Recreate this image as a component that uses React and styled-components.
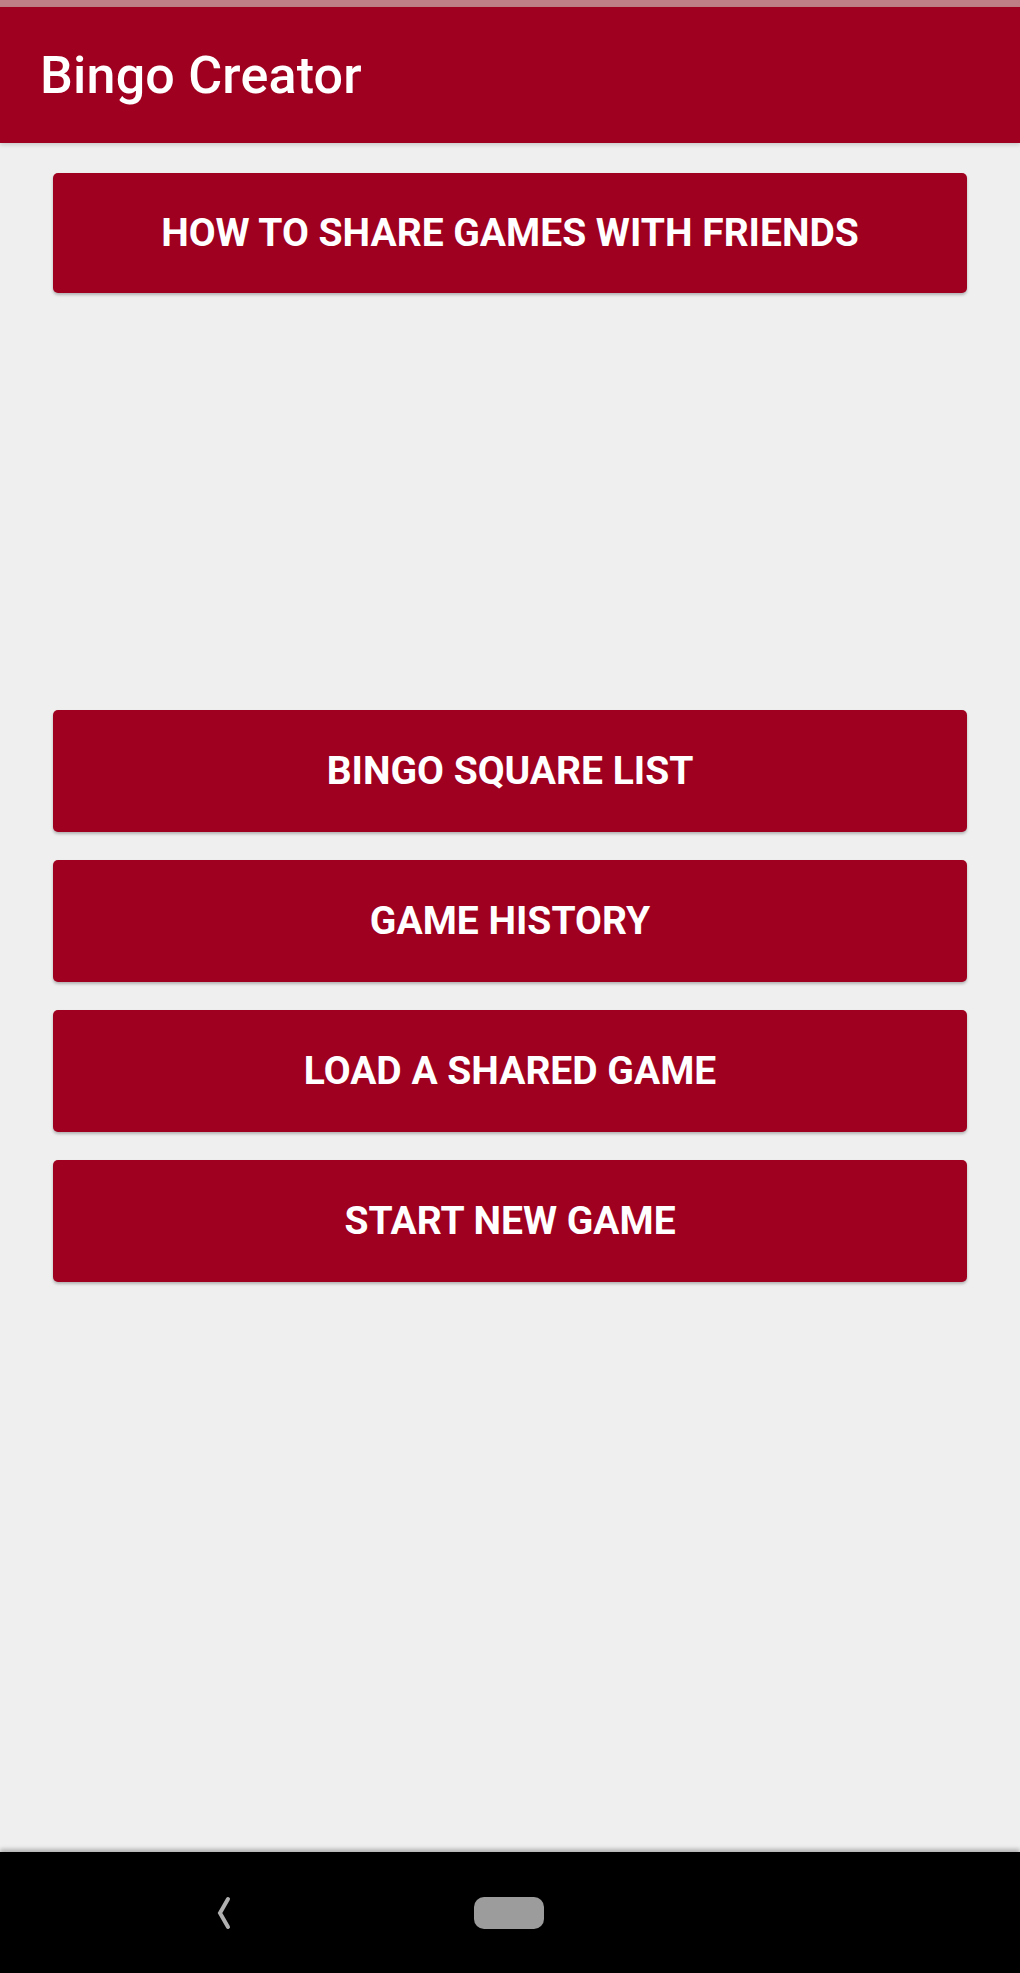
import React from 'react'
import styled, { createGlobalStyle } from 'styled-components'

const GlobalStyle = createGlobalStyle`
  html, body {
    margin: 0;
    padding: 0;
    background: #efefef;
    font-family: Roboto, "Liberation Sans", Arial, sans-serif;
  }
`

const RED = '#a0001f'

const Screen = styled.div`
  min-height: 100vh;
  display: flex;
  flex-direction: column;
  background: #efefef;
`

const StatusStrip = styled.div`
  height: 7px;
  background: #bf7e85;
`

const AppBar = styled.header`
  height: 136px;
  background: ${RED};
  display: flex;
  align-items: center;
  padding-left: 40px;
  box-shadow: 0 2px 4px rgba(0, 0, 0, 0.15);
`

const Title = styled.h1`
  margin: 0;
  color: #fff;
  font-size: 52px;
  font-weight: 500;
  letter-spacing: 0.2px;
`

const Content = styled.main`
  flex: 1;
  display: flex;
  flex-direction: column;
  gap: 28px;
  padding: 30px 53px 0 53px;
`

const AdSpace = styled.div`
  height: ${p => p.h}px;
`

const Button = styled.button`
  height: ${p => p.h || 122}px;
  width: 100%;
  border: none;
  border-radius: 5px;
  background: ${RED};
  color: #fff;
  font-family: Roboto, "Liberation Sans", Arial, sans-serif;
  font-size: 39px;
  font-weight: 700;
  text-transform: uppercase;
  letter-spacing: 0;
  box-shadow: 0 2px 3px rgba(0, 0, 0, 0.25);
  cursor: pointer;
`

const NavBar = styled.nav`
  height: 121px;
  background: #000;
  display: flex;
  align-items: center;
  box-shadow: 0 -3px 4px rgba(0, 0, 0, 0.25);
`

const BackIcon = styled.svg`
  margin-left: 214px;
  width: 20px;
  height: 34px;
`

const HomePill = styled.div`
  margin-left: 240px;
  width: 70px;
  height: 32px;
  border-radius: 10px;
  background: #9c9c9c;
`

const menu = ['Bingo Square List', 'Game History', 'Load a Shared Game', 'Start New Game']

export default function App() {
  return (
    <Screen>
      <GlobalStyle />
      <StatusStrip />
      <AppBar>
        <Title>Bingo Creator</Title>
      </AppBar>
      <Content>
        <Button h={120}>How to share games with friends</Button>
        <AdSpace h={361} />
        {menu.map(label => (
          <Button key={label}>{label}</Button>
        ))}
      </Content>
      <NavBar>
        <BackIcon viewBox="0 0 20 34">
          <path d="M14 3 L6 17 L14 31" fill="none" stroke="#b0b0b0" strokeWidth="4" strokeLinecap="round" />
        </BackIcon>
        <HomePill />
      </NavBar>
    </Screen>
  )
}
